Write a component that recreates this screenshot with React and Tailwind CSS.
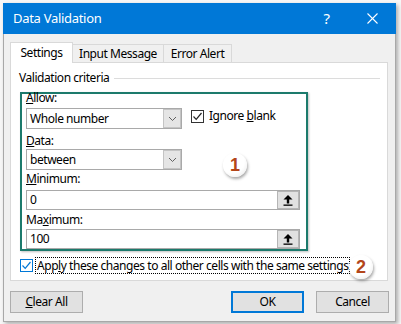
import React from 'react';

const font = { fontFamily: '"Noto Sans", "Open Sans", Arial, sans-serif' };

const Chevron = () => (
  <svg width="9" height="6" viewBox="0 0 9 6" className="text-[#606060]">
    <polyline points="1,1 4.5,4.5 8,1" fill="none" stroke="currentColor" strokeWidth="1" />
  </svg>
);

const UploadIcon = () => (
  <svg width="10" height="11" viewBox="0 0 10 11">
    <polygon points="5,0 9.5,4.5 0.5,4.5" fill="#000" />
    <rect x="3.8" y="4" width="2.4" height="4.5" fill="#000" />
    <rect x="0.5" y="9.5" width="9" height="1.3" fill="#000" />
  </svg>
);

const Check = ({ color }) => (
  <svg width="11" height="11" viewBox="0 0 11 11">
    <polyline points="1.5,5.5 4.2,8.3 9.5,2" fill="none" stroke={color} strokeWidth="1.2" />
  </svg>
);

const Dropdown = ({ value }) => (
  <div className="w-[156px] h-[21px] border border-[#a9a9a9] bg-white flex items-center">
    <span className="flex-1 pl-[3px] text-[12px] text-black leading-[14px]">{value}</span>
    <div className="w-[18px] h-full bg-[#e5e5e5] border border-[#c4c4c4] flex items-center justify-center">
      <Chevron />
    </div>
  </div>
);

const RangeInput = ({ value }) => (
  <div className="w-[274px] h-[20px] border border-[#a9a9a9] bg-white flex items-center">
    <span className="flex-1 pl-[3px] text-[12px] text-black leading-[14px]">{value}</span>
    <div className="w-[22px] h-full bg-[#e1e1e1] border border-[#b5b5b5] flex items-center justify-center">
      <UploadIcon />
    </div>
  </div>
);

const Badge = ({ n, className }) => (
  <div
    className={`absolute w-[24px] h-[24px] rounded-full bg-[radial-gradient(circle_at_40%_35%,#ffffff_55%,#e4e4e4_100%)] shadow-[1px_2px_3px_rgba(0,0,0,0.35)] flex items-center justify-center tracking-normal ${className}`}
  >
    <span
      className="text-[18px] font-bold text-[#b3461a] leading-none"
      style={{ fontFamily: '"Liberation Sans", Arial, sans-serif' }}
    >
      {n}
    </span>
  </div>
);

const Button = ({ children, primary }) => (
  <div
    className={`w-[73px] h-[22px] bg-[#e1e1e1] flex items-center justify-center text-[12px] text-black ${
      primary ? 'border-2 border-[#0078d7]' : 'border border-[#adadad]'
    }`}
  >
    {children}
  </div>
);

export default function App() {
  return (
    <div className="w-[401px] h-[324px] bg-[#f7f7f7] pt-[3px] pl-[3px]" style={font}>
      <div className="w-[393px] h-[319px] flex flex-col shadow-[2px_2px_4px_rgba(0,0,0,0.3)]">
        {/* title bar */}
        <div className="h-[31px] bg-[#0078d7] flex items-center pl-[10px] text-white">
          <span className="text-[13px] leading-none tracking-[-0.3px]">Data Validation</span>
          <span className="ml-auto text-[15px] leading-none">?</span>
          <svg width="11" height="11" viewBox="0 0 11 11" className="ml-[37px] mr-[18px]">
            <line x1="0.5" y1="0.5" x2="10.5" y2="10.5" stroke="#fff" strokeWidth="1.1" />
            <line x1="10.5" y1="0.5" x2="0.5" y2="10.5" stroke="#fff" strokeWidth="1.1" />
          </svg>
        </div>

        {/* body */}
        <div className="flex-1 bg-[#f0f0f0] border-x border-b border-[#a8a8a8] pl-[6px] pt-[8px] tracking-[-0.45px]">
          <div className="h-[20px] flex items-end text-[12px] text-black">
            <div className="relative z-10 w-[63px] h-[21px] -mb-px bg-white border border-b-0 border-[#d9d9d9] flex items-center justify-center leading-[14px]">
              Settings
            </div>
            <div className="-ml-px w-[92px] h-[18px] border border-b-0 border-[#d9d9d9] flex items-center justify-center leading-[14px]">
              Input Message
            </div>
            <div className="-ml-px w-[69px] h-[18px] border border-b-0 border-[#d9d9d9] flex items-center justify-center leading-[14px]">
              Error Alert
            </div>
          </div>

          <div className="relative w-[378px] h-[219px] bg-white border border-[#d9d9d9] text-[12px] text-black">
            <div className="mt-[8px] pl-[8px] pr-[7px] h-[14px] flex items-center">
              <span className="leading-[14px]">Validation criteria</span>
              <div className="flex-1 h-px bg-[#dcdcdc] ml-[5px]" />
            </div>

            <div className="ml-[9px] mt-[7px] w-[288px] h-[159px] border-2 border-[#1c7a6c] shadow-[1px_1px_2px_rgba(0,0,0,0.25)] pl-[4px]">
              <div className="-mt-[3px] leading-[14px] h-[14px]">
                <span className="underline">A</span>llow:
              </div>
              <div className="mt-[3px] flex items-start">
                <Dropdown value="Whole number" />
                <div className="ml-[9px] mt-[1px] flex items-center">
                  <div className="w-[13px] h-[13px] border border-[#333333] bg-white flex items-center justify-center">
                    <Check color="#222222" />
                  </div>
                  <span className="ml-[5px] leading-[14px]">
                    Ignore <span className="underline">b</span>lank
                  </span>
                </div>
              </div>
              <div className="mt-[5px] leading-[14px] h-[14px]">
                <span className="underline">D</span>ata:
              </div>
              <div className="mt-[1px]">
                <Dropdown value="between" />
              </div>
              <div className="mt-[2px] leading-[14px] h-[14px]">
                <span className="underline">M</span>inimum:
              </div>
              <div className="mt-[4px]">
                <RangeInput value="0" />
              </div>
              <div className="mt-[3px] leading-[14px] h-[14px]">
                Ma<span className="underline">x</span>imum:
              </div>
              <div className="mt-[2px]">
                <RangeInput value="100" />
              </div>
            </div>

            <div className="ml-[9px] mt-[6px] flex items-center">
              <div className="w-[13px] h-[13px] border border-[#0078d7] bg-white flex items-center justify-center">
                <Check color="#0078d7" />
              </div>
              <div className="ml-[2px] h-[17px] border border-dotted border-black px-px flex items-center leading-[14px] whitespace-nowrap">
                App<span className="underline">l</span>y these changes to all other cells with the same settings
              </div>
            </div>

            <Badge n="1" className="left-[212px] top-[90px]" />
            <Badge n="2" className="left-[338px] top-[192px]" />
          </div>

          <div className="mt-[10px] w-[379px] flex items-center">
            <Button>
              <span>
                <span className="underline">C</span>lear All
              </span>
            </Button>
            <div className="ml-auto flex gap-[12px]">
              <Button primary>OK</Button>
              <Button>Cancel</Button>
            </div>
          </div>
        </div>
      </div>
    </div>
  );
}
